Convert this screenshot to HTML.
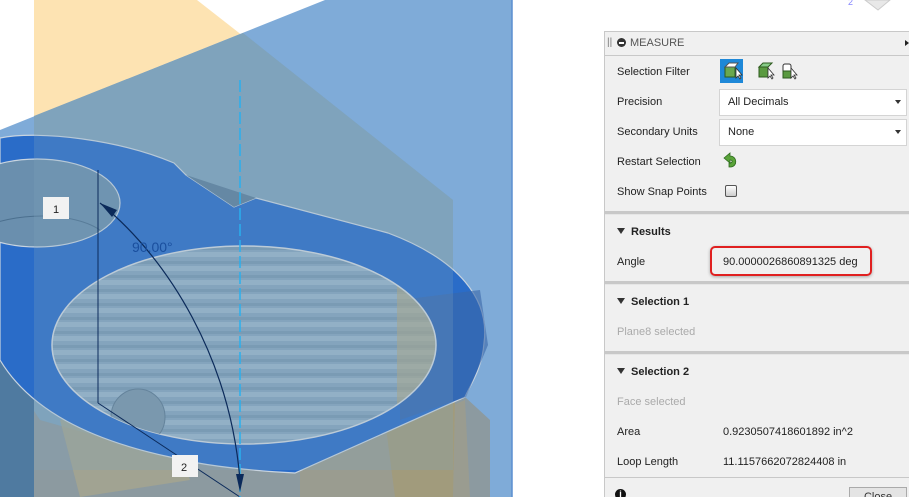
<!DOCTYPE html>
<html style="overflow:hidden;width:909px;height:497px"><head><meta charset="utf-8"><style>
body{margin:0;width:909px;height:497px;overflow:hidden;background:#fff;font-family:"Liberation Sans",Arial,sans-serif;position:relative}
#p{position:absolute;left:604px;top:31px;width:305px;height:466px;overflow:hidden;background:#f0f0f0;border-left:1px solid #c8c8c8;border-top:1px solid #c8c8c8;font-size:11px;color:#222}
.a{position:absolute;white-space:nowrap}
.l{left:12px}
.v{left:118px}
.sep{position:absolute;left:0;width:305px;height:3px;background:#c8c8c8;border-bottom:1px solid #e6e6e6}
.h{font-weight:bold;font-size:11px}
.dd{position:absolute;left:114px;width:186px;height:25px;background:#fff;border:1px solid #d4d4d4}
.dd span{position:absolute;left:8px;top:6px}
.dd i{position:absolute;right:5px;top:10px;border-left:3px solid transparent;border-right:3px solid transparent;border-top:4px solid #333}
.g{color:#aaa}
.tri{display:inline-block;border-left:4px solid transparent;border-right:4px solid transparent;border-top:6px solid #333;margin-right:6px;vertical-align:1px}
</style></head><body>
<svg width="600" height="497" style="position:absolute;left:0;top:0">
<defs>
<clipPath id="ell"><ellipse cx="244" cy="345" rx="192" ry="99"/></clipPath>
<pattern id="thr" width="10" height="14" patternUnits="userSpaceOnUse"><rect width="10" height="14" fill="#86a5be"/><rect y="0" width="10" height="5" fill="#98b4ca"/><rect y="9" width="10" height="3" fill="#7898b2"/></pattern>
</defs>
<rect width="600" height="497" fill="#fff"/>
<polygon points="34,0 197,0 453,200 453,497 34,497" fill="#fde3b2"/>
<polygon points="0,130 325,0 512,0 512,497 0,497" fill="#7fabd8"/>
<polygon points="34,116 243,33 453,200 453,470 34,470" fill="#7fa3bc"/>
<line x1="512" y1="0" x2="512" y2="497" stroke="#5b8fd0" stroke-width="1.5"/>
<polygon points="0,360 40,420 170,457 295,473 465,397 490,420 490,497 0,497" fill="#8c9aa0"/>
<polygon points="0,360 34,400 34,497 0,497" fill="#4f7aa0"/>
<polygon points="60,420 160,400 190,480 80,497" fill="#a9a68b" opacity=".7"/>
<polygon points="300,470 465,400 470,497 300,497" fill="#9a9c90"/>
<polygon points="385,420 455,400 453,497 395,497" fill="#a19b7c"/>
<path d="M0,138 C40,130 120,140 174,163 L186,175 L234,207 L256,198 L388,233 C460,260 490,300 484,343 C482,370 470,385 465,397 L295,473 C240,470 200,465 170,457 C90,440 30,410 0,360 Z" fill="#2a6cc8" stroke="#c8d4e0" stroke-width="1.2"/>
<polygon points="186,175 234,207 256,198" fill="#5c7f9c"/>
<polygon points="400,300 480,290 488,345 466,397 400,420" fill="#3a67a8" opacity=".6"/>
<ellipse cx="37" cy="203" rx="83" ry="44" fill="#6a8fae" stroke="#c8d4e0" stroke-width="1.2"/>
<path d="M-40,240 C0,210 70,210 100,230" fill="none" stroke="#4b6f8e" stroke-width="1"/>
<ellipse cx="244" cy="345" rx="192" ry="99" fill="url(#thr)"/>
<rect x="397" y="280" width="45" height="150" fill="#b0a780" opacity=".6" clip-path="url(#ell)"/>
<ellipse cx="244" cy="345" rx="192" ry="99" fill="none" stroke="#d0d8e0" stroke-width="1.5"/>
<ellipse cx="138" cy="417" rx="27" ry="28" fill="#7894aa" stroke="#5b7890" clip-path="url(#ell)"/>
<polygon points="34,116 243,33 453,200 453,470 34,470" fill="#7fa3bc" opacity=".25"/>
<line x1="98" y1="170" x2="98" y2="403" stroke="#0b2a5a" stroke-width="1"/>
<line x1="98" y1="403" x2="240" y2="497" stroke="#0b2a5a" stroke-width="1"/>
<line x1="240" y1="80" x2="240" y2="497" stroke="#29b0ee" stroke-width="1.5" stroke-dasharray="12,4"/>
<path d="M100,203 C170,260 230,360 240,480" fill="none" stroke="#0b2a5a" stroke-width="1.2"/>
<polygon points="100,203 117,210 112,217" fill="#0b2a5a"/>
<polygon points="240,492 236,474 244,474" fill="#0b2a5a"/>
<text x="132" y="252" font-family="Liberation Sans" font-size="14" fill="#1a4f9e">90.00°</text>
<rect x="43" y="197" width="26" height="22" fill="#f2f2f2"/>
<text x="56" y="213" font-size="11" text-anchor="middle" font-family="Liberation Sans" fill="#222">1</text>
<rect x="172" y="455" width="26" height="22" fill="#f2f2f2"/>
<text x="184" y="471" font-size="11" text-anchor="middle" font-family="Liberation Sans" fill="#222">2</text>
</svg>
<svg width="60" height="12" style="position:absolute;left:840px;top:0"><text x="8" y="5" font-size="9" fill="#88f" font-family="Liberation Sans">2</text><polygon points="25,0 50,0 38,10" fill="#e8e8e8" stroke="#ccc"/></svg>
<div id="p">
<div class="a" style="left:2px;top:5px;color:#777;font-size:10px">||</div>
<div class="a" style="left:12px;top:6px;width:9px;height:9px;border-radius:50%;background:#333"></div>
<div class="a" style="left:14px;top:10px;width:5px;height:1.5px;background:#fff"></div>
<div class="a" style="left:25px;top:5px;color:#555;font-size:11px">MEASURE</div>
<div class="a" style="left:300px;top:8px;border-top:3px solid transparent;border-bottom:3px solid transparent;border-left:4px solid #222"></div>
<div class="a" style="left:0;top:23px;width:305px;height:1px;background:#c8c8c8"></div>
<div class="a l" style="top:34px">Selection Filter</div>
<div class="a" style="left:115px;top:27px;width:23px;height:24px;background:#1e88d8"></div>
<svg class="a" style="left:118px;top:30px" width="80" height="18"><rect x="2" y="5" width="10" height="10" fill="#6aa84f" stroke="#2d5a1e"/><polygon points="2,5 6,1 15,1 12,5" fill="#fff" stroke="#555"/><path d="M13,6 L13,16 L15,14 L17,17 L18,16 L16,13 L19,13 Z" fill="#fff" stroke="#333" stroke-width=".8"/>
<rect x="36" y="5" width="9" height="10" fill="#5a9a40" stroke="#2d5a1e"/><polygon points="36,5 40,1 49,1 45,5" fill="#8c8" stroke="#2d5a1e"/><path d="M45,6 L45,16 L47,14 L49,17 L50,16 L48,13 L51,13 Z" fill="#fff" stroke="#333" stroke-width=".8"/>
<rect x="60" y="2" width="8" height="14" rx="2" fill="#fff" stroke="#333"/><rect x="60" y="9" width="8" height="7" fill="#5a9a40" stroke="#2d5a1e"/><path d="M68,6 L68,16 L70,14 L72,17 L73,16 L71,13 L74,13 Z" fill="#fff" stroke="#333" stroke-width=".8"/></svg>
<div class="a l" style="top:64px">Precision</div>
<div class="dd" style="top:57px"><span>All Decimals</span><i></i></div>
<div class="a l" style="top:94px">Secondary Units</div>
<div class="dd" style="top:87px"><span>None</span><i></i></div>
<div class="a l" style="top:124px">Restart Selection</div>
<svg class="a" style="left:117px;top:120px" width="18" height="18"><path d="M2,6 L8,1 L8,4 C15,4 16,14 9,15 L7,15 L7,11 C11,11 11,8 8,8 L8,11 Z" fill="#5aa33a" stroke="#2d6a1e" stroke-width=".8"/></svg>
<div class="a l" style="top:154px">Show Snap Points</div>
<div class="a" style="left:120px;top:153px;width:10px;height:10px;border:1px solid #555;border-radius:2px;background:linear-gradient(#fff,#ccc)"></div>
<div class="sep" style="top:179px"></div>
<div class="a l h" style="top:194px"><span class="tri"></span>Results</div>
<div class="a l" style="top:224px">Angle</div>
<div class="a" style="left:105px;top:214px;width:158px;height:26px;border:2px solid #e02020;border-radius:5px;box-shadow:0 1px 3px rgba(0,0,0,.3)"></div>
<div class="a v" style="top:224px">90.0000026860891325 deg</div>
<div class="sep" style="top:249px"></div>
<div class="a l h" style="top:264px"><span class="tri"></span>Selection 1</div>
<div class="a l g" style="top:294px">Plane8 selected</div>
<div class="sep" style="top:319px"></div>
<div class="a l h" style="top:334px"><span class="tri"></span>Selection 2</div>
<div class="a l g" style="top:364px">Face selected</div>
<div class="a l" style="top:394px">Area</div>
<div class="a v" style="top:394px">0.9230507418601892 in^2</div>
<div class="a l" style="top:424px">Loop Length</div>
<div class="a v" style="top:424px">11.1157662072824408 in</div>
<div class="a" style="left:0;top:445px;width:305px;height:1px;background:#c8c8c8"></div>
<div class="a" style="left:10px;top:457px;width:11px;height:11px;border-radius:50%;background:#111;color:#fff;font-size:9px;font-weight:bold;text-align:center;line-height:11px">i</div>
<div class="a" style="left:244px;top:455px;width:56px;height:20px;border:1px solid #aaa;background:#e4e4e4;text-align:center;line-height:18px;color:#333">Close</div>
</div>
</body></html>
